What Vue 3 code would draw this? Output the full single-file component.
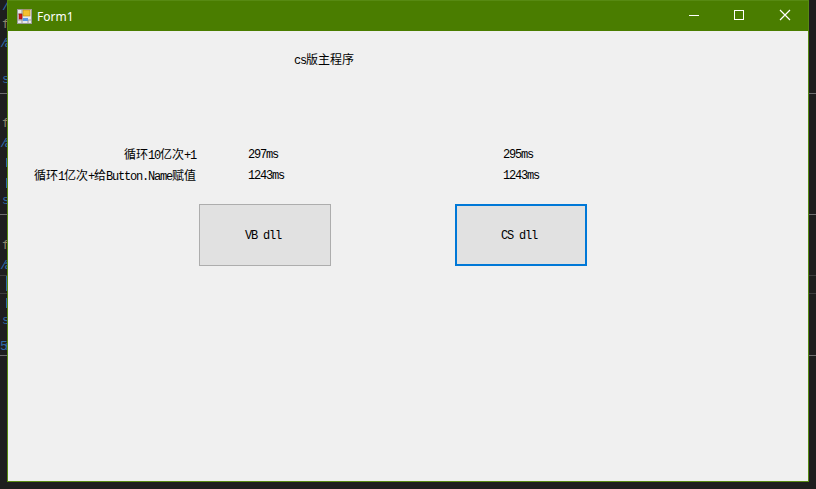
<script setup>
const lines = [
  { y: 93, c: 'bright' },
  { y: 214, c: 'bright' },
  { y: 275, c: 'dim' },
  { y: 293, c: 'dim' },
  { y: 355, c: 'bright' }
]
const frags = [
  { t: '/', x: 2, y: -3, c: 'blue' },
  { t: 'f', x: 2, y: 15, c: 'tan' },
  { t: '/a', x: 0, y: 34, c: 'blue tight' },
  { t: 's', x: 2, y: 70, c: 'blue' },
  { t: 'f', x: 2, y: 114, c: 'tan' },
  { t: '/a', x: 0, y: 134, c: 'blue tight' },
  { t: 's', x: 2, y: 191, c: 'blue' },
  { t: 'f', x: 2, y: 236, c: 'tan' },
  { t: '/a', x: 0, y: 256, c: 'blue tight' },
  { t: 's', x: 2, y: 311, c: 'blue' },
  { t: '5s', x: 0, y: 337, c: 'blue tight' }
]
const bars = [
  { y: 158, h: 9 },
  { y: 178, h: 10 },
  { y: 276, h: 15 },
  { y: 298, h: 10 }
]
</script>

<template>
  <div class="desktop">
    <div v-for="l in lines" :key="l.y" class="bg-line" :class="l.c" :style="{ top: l.y + 'px' }"></div>
    <span
      v-for="f in frags"
      :key="f.y"
      class="bg-text"
      :class="f.c"
      :style="{ left: f.x + 'px', top: f.y + 'px' }"
    >{{ f.t }}</span>
    <div v-for="b in bars" :key="b.y" class="bg-bar" :style="{ top: b.y + 'px', height: b.h + 'px' }"></div>

    <div class="window">
      <header class="titlebar">
        <svg class="app-icon" width="15" height="15" viewBox="0 0 15 15">
          <rect x="0.5" y="0.5" width="14" height="14" fill="#e8e8e8" stroke="#9a9a9a" />
          <path d="M1 5h4M5 1v13M1 11h13M11 11v3" stroke="#9a9a9a" fill="none" />
          <rect x="6" y="1" width="7" height="6" fill="#f5c030" stroke="#c08a10" stroke-width="0.6" />
          <rect x="2" y="5" width="3" height="5" fill="#d01818" stroke="#901010" stroke-width="0.6" />
          <rect x="6" y="9" width="5" height="3" fill="#5a98e8" />
        </svg>
        <span class="title">Form1</span>
        <div class="controls">
          <svg class="ctl" width="46" height="30" viewBox="0 0 46 30">
            <path d="M19 14.5h10" stroke="#fff" fill="none" />
          </svg>
          <svg class="ctl" width="46" height="30" viewBox="0 0 46 30">
            <rect x="18.5" y="9.5" width="9" height="9" stroke="#fff" fill="none" />
          </svg>
          <svg class="ctl" width="46" height="30" viewBox="0 0 46 30">
            <path d="M18 9l10 10M28 9l-10 10" stroke="#fff" stroke-width="1.2" fill="none" />
          </svg>
        </div>
      </header>

      <main class="client">
        <p class="heading"><span>cs</span><span class="cjk">版主程序</span></p>

        <div class="results">
          <div class="label"><span class="cjk">循环</span>10<span class="cjk">亿次</span>+1</div>
          <div class="value">297ms</div>
          <div class="value">295ms</div>
          <div class="label"><span class="cjk">循环</span>1<span class="cjk">亿次</span>+<span class="cjk">给</span>Button.Name<span class="cjk">赋值</span></div>
          <div class="value">1243ms</div>
          <div class="value">1243ms</div>
        </div>

        <div class="actions">
          <button class="btn" type="button">VB dll</button>
          <button class="btn focus" type="button">CS dll</button>
        </div>
      </main>
    </div>
  </div>
</template>

<style>
html,
body {
  margin: 0;
  background: #1e1e1e;
}
</style>

<style scoped>
.desktop {
  position: relative;
  width: 816px;
  height: 489px;
  overflow: hidden;
  background: #1e1e1e;
}
.bg-line {
  position: absolute;
  left: 0;
  width: 816px;
  height: 1px;
}
.bg-line.bright {
  background: #6e6e6e;
}
.bg-line.dim {
  background: #3e3e3e;
}
.bg-text {
  position: absolute;
  font: 13px/20px "Liberation Mono", monospace;
  white-space: nowrap;
}
.bg-text.tight {
  letter-spacing: -3.5px;
}
.bg-text.blue {
  color: #2f6aa8;
}
.bg-text.tan {
  color: #8f8468;
}
.bg-bar {
  position: absolute;
  left: 6px;
  width: 1px;
  background: #2f6aa8;
}
.window {
  position: absolute;
  left: 7px;
  top: 0;
  width: 802px;
  height: 482px;
  box-sizing: border-box;
  display: flex;
  flex-direction: column;
  background: #4a7d00;
  border: 1px solid #578a12;
}
.titlebar {
  height: 30px;
  flex: none;
  display: flex;
  align-items: center;
  padding-left: 9px;
  color: #fff;
  font: 12px "Noto Sans", "Open Sans", sans-serif;
}
.app-icon {
  flex: none;
}
.title {
  margin-left: 5px;
}
.controls {
  margin-left: auto;
  display: flex;
}
.ctl {
  display: block;
}
.client {
  flex: 1;
  background: #f0f0f0;
  color: #000;
  font: 12px/12px "Liberation Mono", monospace;
  letter-spacing: -1.2px;
}
.cjk {
  font: 12px/12px "Noto Sans CJK SC", sans-serif;
  letter-spacing: 0;
}
.heading {
  margin: 22px 0 0 286px;
  height: 12px;
}
.results {
  margin-top: 83px;
  display: grid;
  grid-template-columns: 189px 255px 100px;
  grid-auto-rows: 12px;
  row-gap: 9px;
}
.label {
  padding-right: 1px;
  text-align: right;
  white-space: nowrap;
}
.value {
  padding-left: 51px;
  line-height: 14px;
  white-space: nowrap;
}
.actions {
  margin: 23px 0 0 191px;
  display: flex;
  gap: 124px;
}
.btn {
  width: 132px;
  height: 62px;
  box-sizing: border-box;
  padding: 2px 4px 0 0;
  background: #e1e1e1;
  border: 1px solid #adadad;
  border-radius: 0;
  color: #000;
  font: 12px/12px "Liberation Mono", monospace;
  letter-spacing: -1.2px;
}
.btn.focus {
  border: 2px solid #0078d7;
}
</style>
